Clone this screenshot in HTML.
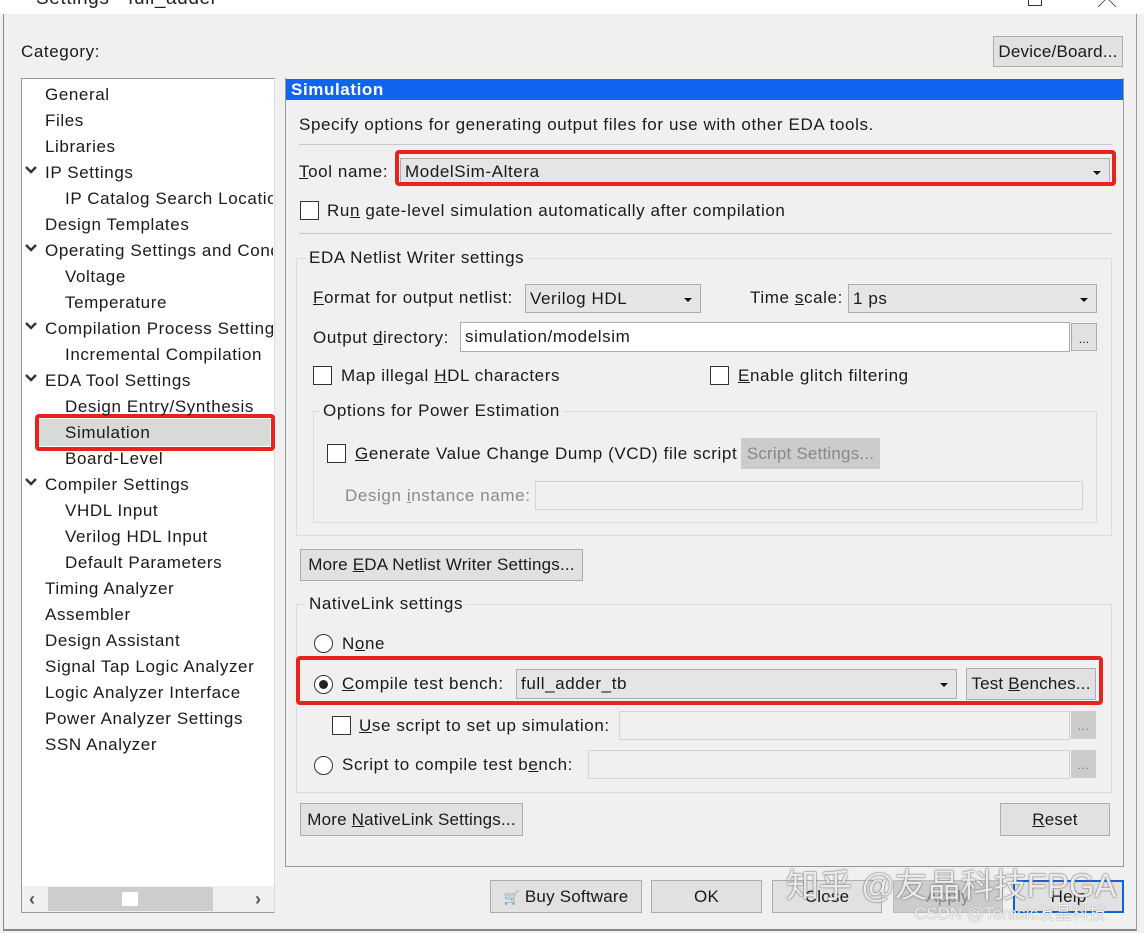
<!DOCTYPE html>
<html><head><meta charset="utf-8"><style>
*{margin:0;padding:0;box-sizing:border-box}
body{width:1144px;height:933px;overflow:hidden;background:#f0f0f0;font-family:"Liberation Sans","Noto Sans CJK SC",sans-serif;font-size:17px;letter-spacing:0.6px;color:#1a1a1a;position:relative}
.a{position:absolute}
.t{position:absolute;height:22px;line-height:22px;white-space:nowrap}
.btn{position:absolute;background:#e1e1e1;border:1px solid #adadad;text-align:center;white-space:nowrap;letter-spacing:0.2px}
.cb{position:absolute;width:19px;height:19px;border:1px solid #333;background:#fff}
.rb{position:absolute;width:19px;height:19px;border:1px solid #333;border-radius:50%;background:#fff}
.combo{position:absolute;background:#e5e5e5;border:1px solid #adadad;padding-left:4px;white-space:nowrap}
.combo:after{content:"";position:absolute;right:8px;top:50%;margin-top:-1px;border-left:4px solid transparent;border-right:4px solid transparent;border-top:4px solid #111}
.inp{position:absolute;background:#fff;border:1px solid #adadad}
.dis{position:absolute;background:#f0f0f0;border:1px solid #d4d4d4}
.dot{position:absolute;background:#ccc;border:1px solid #ccc;color:#777;font-size:12px;text-align:center}
.grp{position:absolute;border:1px solid #dcdcdc}
.red{position:absolute;border:4px solid #e8231e;border-radius:4px}
u{text-decoration:underline}
.g{color:#8a8a8a}
</style></head><body>
<div class="a" style="left:0;top:0;width:1144px;height:14px;background:#fff"></div>
<div class="t" style="left:36px;top:-12px;font-size:19px;color:#222">Settings - full_adder</div>
<div class="a" style="left:1028px;top:-6px;width:14px;height:12px;border:1px solid #333"></div>
<div class="t" style="left:1098px;top:-12px;font-size:18px">╳</div>
<div class="a" style="left:3px;top:14px;width:1px;height:917px;background:#888"></div>
<div class="a" style="left:3px;top:929px;width:1134px;height:2px;background:#888"></div>
<div class="a" style="left:1136px;top:14px;width:1px;height:917px;background:#999"></div>

<div class="t" style="left:21px;top:41px">Category:</div>
<div class="btn" style="left:993px;top:36px;width:130px;height:31px;line-height:29px">Device/Board...</div>

<div class="a" style="left:21px;top:78px;width:254px;height:835px;background:#fff;border:1px solid #999;border-right-color:#ddd"></div>
<div class="a" style="left:38px;top:419px;width:232px;height:27px;background:#d9d9d9"></div>
<div class="red" style="left:35px;top:414px;width:240px;height:37px;border-width:4px"></div>
<div class="a" style="left:45px;top:82px;line-height:26px;width:228px;overflow:hidden;white-space:nowrap">
<div>General</div><div>Files</div><div>Libraries</div><div>IP Settings</div>
<div style="padding-left:20px">IP Catalog Search Locations</div><div>Design Templates</div>
<div>Operating Settings and Conditions</div><div style="padding-left:20px">Voltage</div>
<div style="padding-left:20px">Temperature</div><div>Compilation Process Settings</div>
<div style="padding-left:20px">Incremental Compilation</div><div>EDA Tool Settings</div>
<div style="padding-left:20px">Design Entry/Synthesis</div><div style="padding-left:20px">Simulation</div>
<div style="padding-left:20px">Board-Level</div><div>Compiler Settings</div>
<div style="padding-left:20px">VHDL Input</div><div style="padding-left:20px">Verilog HDL Input</div>
<div style="padding-left:20px">Default Parameters</div><div>Timing Analyzer</div><div>Assembler</div>
<div>Design Assistant</div><div>Signal Tap Logic Analyzer</div><div>Logic Analyzer Interface</div>
<div>Power Analyzer Settings</div><div>SSN Analyzer</div></div>
<svg class="a" style="left:24px;top:0" width="18" height="500">
<g fill="none" stroke="#333" stroke-width="2.4"><path d="M2 167l5 5 5-5"/><path d="M2 245l5 5 5-5"/><path d="M2 323l5 5 5-5"/><path d="M2 375l5 5 5-5"/><path d="M2 479l5 5 5-5"/></g></svg>
<div class="a" style="left:22px;top:886px;width:252px;height:26px;background:#f0f0f0"></div>
<div class="a" style="left:48px;top:887px;width:165px;height:24px;background:#cdcdcd"></div>
<div class="a" style="left:122px;top:892px;width:16px;height:14px;background:#fff"></div>
<div class="t" style="left:29px;top:888px;font-size:18px;color:#555;font-weight:bold">‹</div>
<div class="t" style="left:255px;top:888px;font-size:18px;color:#555;font-weight:bold">›</div>

<div class="a" style="left:285px;top:78px;width:839px;height:789px;border:1px solid #999;border-top:none"></div>
<div class="a" style="left:286px;top:79px;width:837px;height:21px;background:#0f64f0"></div>
<div class="t" style="left:291px;top:79px;color:#fff;font-weight:bold;line-height:21px">Simulation</div>
<div class="t" style="left:299px;top:114px">Specify options for generating output files for use with other EDA tools.</div>
<div class="a" style="left:299px;top:144px;width:813px;height:1px;background:#c8c8c8"></div>

<div class="t" style="left:299px;top:161px"><u>T</u>ool name:</div>
<div class="combo" style="left:400px;top:158px;width:710px;height:27px;line-height:25px">ModelSim-Altera</div>
<div class="red" style="left:395px;top:150px;width:721px;height:36px"></div>
<div class="cb" style="left:300px;top:201px"></div>
<div class="t" style="left:327px;top:200px">Ru<u>n</u> gate-level simulation automatically after compilation</div>
<div class="a" style="left:299px;top:233px;width:813px;height:1px;background:#c8c8c8"></div>

<div class="grp" style="left:296px;top:258px;width:816px;height:278px"></div>
<div class="t" style="left:306px;top:247px;background:#f0f0f0;padding:0 3px">EDA Netlist Writer settings</div>
<div class="t" style="left:313px;top:287px"><u>F</u>ormat for output netlist:</div>
<div class="combo" style="left:525px;top:284px;width:176px;height:29px;line-height:27px">Verilog HDL</div>
<div class="t" style="left:750px;top:287px">Time <u>s</u>cale:</div>
<div class="combo" style="left:848px;top:284px;width:249px;height:29px;line-height:27px">1 ps</div>
<div class="t" style="left:313px;top:327px">Output <u>d</u>irectory:</div>
<div class="inp" style="left:460px;top:322px;width:610px;height:30px;line-height:28px;padding-left:4px">simulation/modelsim</div>
<div class="btn" style="left:1071px;top:323px;width:26px;height:28px;font-size:12px;line-height:30px">...</div>
<div class="cb" style="left:313px;top:366px"></div>
<div class="t" style="left:341px;top:365px">Map illegal <u>H</u>DL characters</div>
<div class="cb" style="left:710px;top:366px"></div>
<div class="t" style="left:738px;top:365px"><u>E</u>nable glitch filtering</div>

<div class="grp" style="left:313px;top:411px;width:784px;height:112px"></div>
<div class="t" style="left:320px;top:400px;background:#f0f0f0;padding:0 3px">Options for Power Estimation</div>
<div class="cb" style="left:327px;top:444px"></div>
<div class="t" style="left:355px;top:443px"><u>G</u>enerate Value Change Dump (VCD) file script</div>
<div class="btn" style="left:741px;top:438px;width:139px;height:31px;line-height:29px;background:#cccccc;border-color:#cccccc;color:#888">Script Settings...</div>
<div class="t g" style="left:345px;top:485px">Design <u>i</u>nstance name:</div>
<div class="dis" style="left:535px;top:481px;width:548px;height:29px"></div>

<div class="btn" style="left:300px;top:549px;width:283px;height:32px;line-height:30px">More <u>E</u>DA Netlist Writer Settings...</div>

<div class="grp" style="left:296px;top:604px;width:816px;height:189px"></div>
<div class="t" style="left:306px;top:593px;background:#f0f0f0;padding:0 3px">NativeLink settings</div>
<div class="rb" style="left:314px;top:634px"></div>
<div class="t" style="left:342px;top:633px">N<u>o</u>ne</div>
<div class="rb" style="left:314px;top:675px"></div>
<div class="a" style="left:319px;top:680px;width:9px;height:9px;border-radius:50%;background:#222"></div>
<div class="t" style="left:342px;top:673px"><u>C</u>ompile test bench:</div>
<div class="combo" style="left:516px;top:669px;width:441px;height:30px;line-height:28px">full_adder_tb</div>
<div class="btn" style="left:966px;top:668px;width:130px;height:32px;line-height:30px">Test <u>B</u>enches...</div>
<div class="red" style="left:296px;top:656px;width:807px;height:49px"></div>
<div class="cb" style="left:332px;top:716px"></div>
<div class="t" style="left:359px;top:715px"><u>U</u>se script to set up simulation:</div>
<div class="dis" style="left:619px;top:711px;width:451px;height:29px"></div>
<div class="dot" style="left:1071px;top:711px;width:25px;height:28px;line-height:28px">...</div>
<div class="rb" style="left:314px;top:756px"></div>
<div class="t" style="left:342px;top:754px">Script to compile test b<u>e</u>nch:</div>
<div class="dis" style="left:588px;top:750px;width:482px;height:29px"></div>
<div class="dot" style="left:1071px;top:750px;width:25px;height:28px;line-height:28px">...</div>

<div class="btn" style="left:300px;top:803px;width:223px;height:33px;line-height:31px">More <u>N</u>ativeLink Settings...</div>
<div class="btn" style="left:1000px;top:803px;width:110px;height:33px;line-height:31px"><u>R</u>eset</div>

<div class="btn" style="left:490px;top:880px;width:152px;height:33px;line-height:31px"><span style="font-size:13px">🛒</span> Buy Software</div>
<div class="btn" style="left:651px;top:880px;width:111px;height:33px;line-height:31px">OK</div>
<div class="btn" style="left:772px;top:880px;width:110px;height:33px;line-height:31px">Close</div>
<div class="btn" style="left:893px;top:880px;width:110px;height:33px;line-height:31px;background:#cccccc;border-color:#bbb;color:#888">Apply</div>
<div class="btn" style="left:1013px;top:880px;width:111px;height:33px;line-height:29px;border:2px solid #0a64d8">Help</div>

<div class="t" style="left:786px;top:868px;font-size:33px;line-height:36px;height:36px;letter-spacing:0;color:rgba(255,255,255,0.85);text-shadow:0 0 2px #777,0 0 1px #555">知乎 @友晶科技FPGA</div>
<div class="t" style="left:914px;top:903px;font-size:17px;letter-spacing:0;color:rgba(255,255,255,0.9);text-shadow:0 0 1px #666">CSDN @Terasic友晶科技</div>
</body></html>
